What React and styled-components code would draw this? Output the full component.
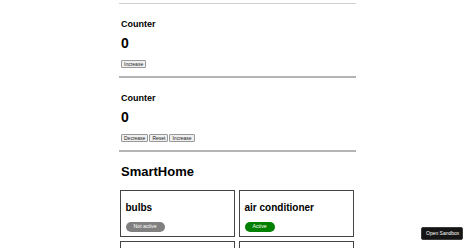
import React, { useState } from "react";
import styled, { createGlobalStyle } from "styled-components";

const Global = createGlobalStyle`
  html, body { margin: 0; padding: 0; overflow: hidden; background: #fff; }
  body { font-family: "Liberation Sans", Arial, sans-serif; color: #000; }
`;

const Page = styled.div`
  width: 237px;
  margin: 0 auto;
  padding-top: 3px;
`;

const Divider = styled.hr`
  margin: 0;
  border: none;
  border-top: ${(p) => (p.$thin ? "1px solid #cfcfcf" : "2px solid #b4b4b4")};
`;

const Section = styled.section`
  padding: 15px 2.5px 8px;
`;

const Title = styled.h3`
  margin: 0;
  font-size: 9px;
  font-weight: bold;
  line-height: 1.15;
`;

const Count = styled.h1`
  margin: 5.5px 0 9px;
  font-size: 14px;
  font-weight: bold;
  line-height: 1.15;
`;

const Buttons = styled.div`
  display: flex;
  gap: 1px;
`;

const Button = styled.button`
  font-family: "Liberation Sans", Arial, sans-serif;
  font-size: 5px;
  line-height: 6px;
  padding: 0 2px;
  height: 8px;
  border: 1px solid #999;
  border-radius: 1px;
  background: #efefef;
  color: #222;
`;

const Heading = styled.h1`
  margin: 13.5px 2.5px 9.5px;
  font-size: 13px;
  font-weight: bold;
  line-height: 1.15;
`;

const Grid = styled.div`
  display: grid;
  grid-template-columns: 1fr 1fr;
  gap: 4px;
  padding: 0 1.5px;
`;

const Card = styled.div`
  display: flex;
  flex-direction: column;
  align-items: flex-start;
  border: 1px solid #444;
  padding: 11.5px 4.5px 4.5px;
`;

const DeviceName = styled.h2`
  margin: 0 0 8.5px;
  font-size: 10px;
  font-weight: bold;
  line-height: 1.15;
`;

const Badge = styled.span`
  display: block;
  height: 9.5px;
  line-height: 9.5px;
  padding: 0 8px;
  border-radius: 5px;
  font-size: 5.2px;
  color: #fff;
  background: ${(p) => (p.$active ? "#008000" : "#808080")};
`;

const SandboxButton = styled.a`
  position: fixed;
  right: 11px;
  bottom: 8px;
  height: 13px;
  line-height: 11px;
  padding: 0 4px;
  box-sizing: border-box;
  width: 42px;
  text-align: center;
  font-size: 5px;
  color: #fff;
  background: #151515;
  border: 1px solid #3a3a3a;
  border-radius: 2px;
  text-decoration: none;
  white-space: nowrap;
`;

function Counter({ full }) {
  const [n, setN] = useState(0);
  return (
    <Section>
      <Title>Counter</Title>
      <Count>{n}</Count>
      <Buttons>
        {full && <Button onClick={() => setN(n - 1)}>Decrease</Button>}
        {full && <Button onClick={() => setN(0)}>Reset</Button>}
        <Button onClick={() => setN(n + 1)}>Increase</Button>
      </Buttons>
    </Section>
  );
}

const devices = [
  { name: "bulbs", active: false },
  { name: "air conditioner", active: true },
  { name: "television", active: false },
  { name: "fridge", active: true },
];

export default function App() {
  return (
    <>
      <Global />
      <Page>
        <Divider $thin />
        <Counter />
        <Divider />
        <Counter full />
        <Divider />
        <Heading>SmartHome</Heading>
        <Grid>
          {devices.map((d) => (
            <Card key={d.name}>
              <DeviceName>{d.name}</DeviceName>
              <Badge $active={d.active}>{d.active ? "Active" : "Not active"}</Badge>
            </Card>
          ))}
        </Grid>
      </Page>
      <SandboxButton href="#">Open Sandbox</SandboxButton>
    </>
  );
}
